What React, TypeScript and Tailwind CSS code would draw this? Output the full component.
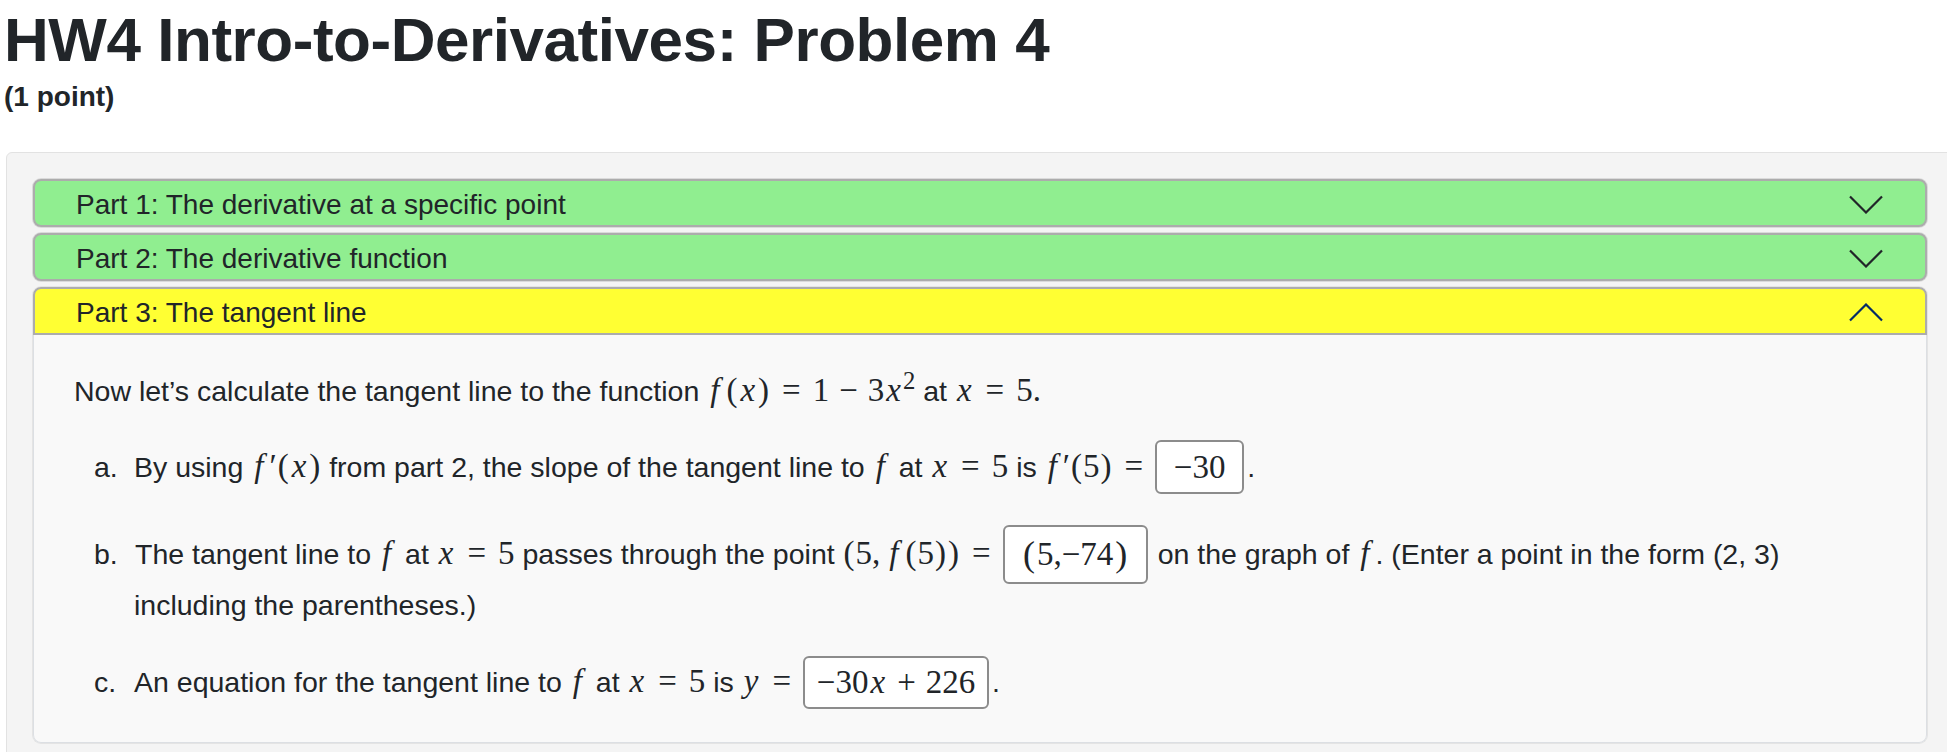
import type { ReactNode } from "react";

// math helpers: serif text that sits inline with the sans body copy.
// Times glyphs are narrower than TeX's, so letters and operators get a little extra room.
function M({ children }: { children: ReactNode }) {
  return <span className="font-['Liberation_Serif',serif] text-[33px] leading-none">{children}</span>;
}

function F() {
  return <span className="pl-[3px] pr-[6px] italic">f</span>;
}

function X({ v = "x" }: { v?: string }) {
  return <span className="px-[2px] italic">{v}</span>;
}

function P({ c }: { c: string }) {
  return <span className="px-[1px]">{c}</span>;
}

function Rel({ children }: { children: ReactNode }) {
  return <span className="mx-[12px]">{children}</span>;
}

function Bin({ children }: { children: ReactNode }) {
  return <span className="mx-[10px]">{children}</span>;
}

function AnswerBox({ className, children }: { className: string; children: ReactNode }) {
  return (
    <span
      className={`inline-flex shrink-0 items-center justify-center rounded-[6px] border-2 border-[#8c8c8c] bg-white font-['Liberation_Serif',serif] text-[33px] leading-none ${className}`}
    >
      {children}
    </span>
  );
}

function ChevronDown() {
  return (
    <svg width="34" height="19" viewBox="0 0 34 19" fill="none" stroke="#212529" strokeWidth="2.2">
      <polyline points="1,1.5 17,17.5 33,1.5" />
    </svg>
  );
}

function ChevronUp() {
  return (
    <svg width="34" height="19" viewBox="0 0 34 19" fill="none" stroke="#052c65" strokeWidth="2.2">
      <polyline points="1,17.5 17,1.5 33,17.5" />
    </svg>
  );
}

const doneParts = ["Part 1: The derivative at a specific point", "Part 2: The derivative function"];

export default function App() {
  return (
    <div className="h-[752px] w-full overflow-hidden bg-white font-['Liberation_Sans',sans-serif] text-[#212529]">
      <h1 className="pl-[4px] pt-[9px] text-[62px] font-bold leading-none tracking-[-0.45px]">
        HW4 Intro-to-Derivatives: Problem 4
      </h1>
      <div className="mt-[12px] pl-[4px] text-[28px] font-bold leading-none">(1 point)</div>

      {/* problem container, runs off the right and bottom edge */}
      <div className="ml-[6px] mt-[41px] h-[700px] w-[1960px] rounded-[6px] border border-[#e2e2e2] bg-[#f4f4f4] pl-[26px] pt-[26px]">
        <div className="flex w-[1894px] flex-col gap-[6px]">
          {doneParts.map((title) => (
            <div
              key={title}
              className="flex h-[48px] items-center justify-between rounded-[8px] border-2 border-[#acacac] bg-[#90ee90] pl-[41px] pr-[42px] pt-[3px] shadow-[0_0_0_1px_#dadada]"
            >
              <span className="text-[28px] leading-none">{title}</span>
              <ChevronDown />
            </div>
          ))}

          <div className="rounded-[8px] shadow-[0_0_0_1px_#e4e4e4]">
            <div className="flex h-[48px] items-center justify-between rounded-t-[8px] border-2 border-[#acacac] bg-[#ffff33] pl-[41px] pr-[42px] pt-[3px]">
              <span className="text-[28px] leading-none">Part 3: The tangent line</span>
              <ChevronUp />
            </div>

            <div className="flex flex-col rounded-b-[8px] border border-t-0 border-[#dcdfe3] bg-[#f9f9f9] pb-[30px] pl-[40px] pt-[26px] text-[28.5px]">
              <div className="flex h-[60px] items-center">
                <span className="leading-[40px] whitespace-nowrap">
                  Now let’s calculate the tangent line to the function{" "}
                  <M>
                    <F />
                    <P c="(" />
                    <X />
                    <P c=")" />
                    <Rel>=</Rel>1<Bin>−</Bin>3<X />
                    <sup>2</sup>
                  </M>{" "}
                  at{" "}
                  <M>
                    <X />
                    <Rel>=</Rel>5.
                  </M>
                </span>
              </div>

              <div className="mt-[16px] flex h-[60px] items-center pl-[20px]">
                <span className="w-[40px] leading-[40px]">a.</span>
                <span className="leading-[40px] whitespace-nowrap">
                  By using{" "}
                  <M>
                    <F />′<P c="(" />
                    <X />
                    <P c=")" />
                  </M>{" "}
                  from part 2, the slope of the tangent line to{" "}
                  <M>
                    <F />
                  </M>{" "}
                  at{" "}
                  <M>
                    <X />
                    <Rel>=</Rel>5
                  </M>{" "}
                  is{" "}
                  <M>
                    <F />′<P c="(" />5<P c=")" />
                    <Rel>=</Rel>
                  </M>
                </span>
                <AnswerBox className="h-[54px] w-[89px]">−30</AnswerBox>
                <span className="ml-[3px] leading-[40px]">.</span>
              </div>

              <div className="mt-[27px] flex h-[60px] items-center pl-[20px]">
                <span className="w-[41px] leading-[40px]">b.</span>
                <span className="leading-[40px] whitespace-nowrap">
                  The tangent line to{" "}
                  <M>
                    <F />
                  </M>{" "}
                  at{" "}
                  <M>
                    <X />
                    <Rel>=</Rel>5
                  </M>{" "}
                  passes through the point{" "}
                  <M>
                    <P c="(" />5,<span className="ml-[6px]" />
                    <F />
                    <P c="(" />5<P c=")" />
                    <P c=")" />
                    <Rel>=</Rel>
                  </M>
                </span>
                <AnswerBox className="h-[59px] w-[145px]">
                  <span className="mr-[2px] text-[36px]">(</span>5,−74<span className="ml-[2px] text-[36px]">)</span>
                </AnswerBox>
                <span className="ml-[10px] leading-[40px] whitespace-nowrap">
                  on the graph of{" "}
                  <M>
                    <F />
                  </M>
                  . (Enter a point in the form (2, 3)
                </span>
              </div>
              <div className="mt-[1px] flex h-[40px] items-center pl-[60px]">
                <span className="leading-[40px]">including the parentheses.)</span>
              </div>

              <div className="mt-[27px] flex h-[60px] items-center pl-[20px]">
                <span className="w-[40px] leading-[40px]">c.</span>
                <span className="leading-[40px] whitespace-nowrap">
                  An equation for the tangent line to{" "}
                  <M>
                    <F />
                  </M>{" "}
                  at{" "}
                  <M>
                    <X />
                    <Rel>=</Rel>5
                  </M>{" "}
                  is{" "}
                  <M>
                    <X v="y" />
                    <Rel>=</Rel>
                  </M>
                </span>
                <AnswerBox className="h-[53px] w-[186px]">
                  −30
                  <X />
                  <Bin>+</Bin>226
                </AnswerBox>
                <span className="ml-[3px] leading-[40px]">.</span>
              </div>
            </div>
          </div>
        </div>
      </div>
    </div>
  );
}
